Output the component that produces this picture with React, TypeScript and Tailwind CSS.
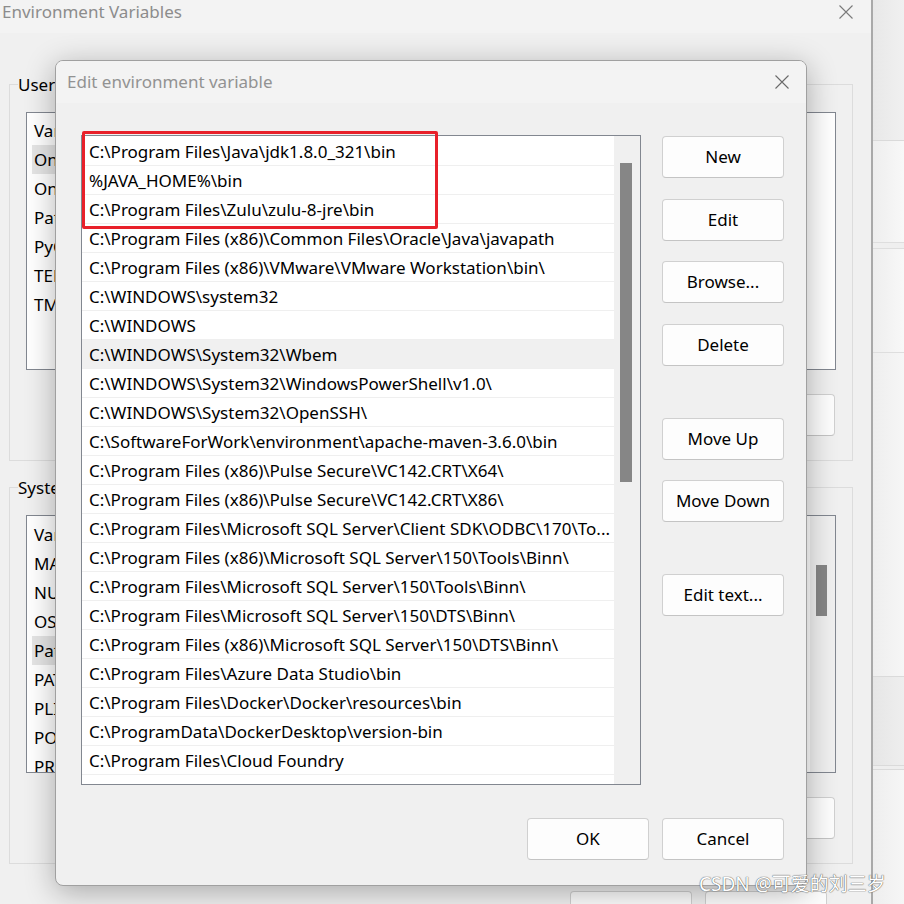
import React from "react";

const paths = [
  "C:\\Program Files\\Java\\jdk1.8.0_321\\bin",
  "%JAVA_HOME%\\bin",
  "C:\\Program Files\\Zulu\\zulu-8-jre\\bin",
  "C:\\Program Files (x86)\\Common Files\\Oracle\\Java\\javapath",
  "C:\\Program Files (x86)\\VMware\\VMware Workstation\\bin\\",
  "C:\\WINDOWS\\system32",
  "C:\\WINDOWS",
  "C:\\WINDOWS\\System32\\Wbem",
  "C:\\WINDOWS\\System32\\WindowsPowerShell\\v1.0\\",
  "C:\\WINDOWS\\System32\\OpenSSH\\",
  "C:\\SoftwareForWork\\environment\\apache-maven-3.6.0\\bin",
  "C:\\Program Files (x86)\\Pulse Secure\\VC142.CRT\\X64\\",
  "C:\\Program Files (x86)\\Pulse Secure\\VC142.CRT\\X86\\",
  "C:\\Program Files\\Microsoft SQL Server\\Client SDK\\ODBC\\170\\To...",
  "C:\\Program Files (x86)\\Microsoft SQL Server\\150\\Tools\\Binn\\",
  "C:\\Program Files\\Microsoft SQL Server\\150\\Tools\\Binn\\",
  "C:\\Program Files\\Microsoft SQL Server\\150\\DTS\\Binn\\",
  "C:\\Program Files (x86)\\Microsoft SQL Server\\150\\DTS\\Binn\\",
  "C:\\Program Files\\Azure Data Studio\\bin",
  "C:\\Program Files\\Docker\\Docker\\resources\\bin",
  "C:\\ProgramData\\DockerDesktop\\version-bin",
  "C:\\Program Files\\Cloud Foundry",
];

const userVars = ["Variable", "OneDrive", "OneDriveConsumer", "Path", "PyCharm", "TEMP", "TMP"];
const sysVars = [
  "Variable",
  "MAVEN_HOME",
  "NUMBER_OF_PROCESSORS",
  "OS",
  "Path",
  "PATHEXT",
  "PLINK_PROTOCOL",
  "POWERSHELL_DISTRIBUTION_CHANNEL",
  "PROCESSOR_ARCHITECTURE",
];

function CloseX({ color = "#5f5f5f" }: { color?: string }) {
  return (
    <svg width="16" height="16" viewBox="0 0 16 16" fill="none">
      <path d="M1.5 1.5 L14.5 14.5 M14.5 1.5 L1.5 14.5" stroke={color} strokeWidth="1.1" />
    </svg>
  );
}

function WinButton({ label, className = "" }: { label: string; className?: string }) {
  return (
    <div
      className={
        "w-[122px] h-[42px] shrink-0 rounded-[4px] border border-[#d0d0d0] border-b-[#c4c4c4] bg-[#fdfdfd] flex items-center justify-center text-[17px] text-black " +
        className
      }
    >
      {label}
    </div>
  );
}

function VarRow({ name, selected }: { name: string; selected: boolean }) {
  return (
    <div
      className={
        selected
          ? "h-[29px] shrink-0 flex items-center ml-[5px] pl-[2px] w-[240px] bg-[#e5e5e5] text-[17px] text-black whitespace-nowrap overflow-hidden"
          : "h-[29px] shrink-0 flex items-center pl-[7px] w-[247px] text-[17px] text-black whitespace-nowrap overflow-hidden"
      }
    >
      {name}
    </div>
  );
}

export default function App() {
  return (
    <div className="relative w-[904px] h-[904px] overflow-hidden bg-[#f0f0f0] font-['Noto_Sans',sans-serif]">
      {/* Window to the right, behind */}
      <div className="absolute left-[873px] top-0 w-[31px] h-[904px] flex flex-col bg-[#f4f4f4]">
        <div className="h-[141px] bg-gradient-to-r from-[#e8e8e8] to-[#f0f0f0] border-b border-[#dadada]" />
        <div className="h-[102px] bg-gradient-to-r from-[#eeeeee] to-[#f8f8f8] border-b border-[#dedede]" />
        <div className="h-[6px] bg-[#efefef] border-b border-[#dedede]" />
        <div className="h-[104px] bg-gradient-to-r from-[#eeeeee] to-[#f8f8f8] border-b border-[#dedede]" />
        <div className="h-[324px] bg-gradient-to-r from-[#eeeeee] to-[#f6f6f6] border-b border-[#dadada]" />
        <div className="h-[89px] bg-gradient-to-r from-[#e6e6e6] to-[#eeeeee] border-b border-[#dadada]" />
        <div className="h-[4px] bg-[#eeeeee] border-b border-[#dadada]" />
        <div className="flex-1 bg-gradient-to-r from-[#eeeeee] to-[#f6f6f6]" />
      </div>

      {/* Environment Variables window (background) */}
      <div className="absolute left-0 top-0 w-[873px] h-[904px] border-r-2 border-[#a9a9a9] flex flex-col bg-[#f0f0f0]">
        <div className="h-[33px] shrink-0 bg-[#f3f3f3] flex items-start justify-between pl-[2px] pr-[17px]">
          <span className="text-[17px] leading-[24px] text-[#8c8c8c]">Environment Variables</span>
          <div className="mt-[4px]">
            <CloseX color="#7a7a7a" />
          </div>
        </div>
        <div className="flex flex-col pl-[9px] pr-[18px]">
          {/* User variables */}
          <div className="relative mt-[51px] h-[377px] border border-[#dcdcdc] px-[16px] pt-[27px] flex flex-col">
            <span className="absolute -top-[12px] left-[8px] bg-[#f0f0f0] text-[17px] leading-[24px] text-black pr-[2px]">
              User variables
            </span>
            <div className="h-[258px] border border-[#828790] bg-white pt-[3px] flex flex-col">
              {userVars.map((v, i) => (
                <VarRow key={v} name={v} selected={i === 1} />
              ))}
            </div>
            <div className="mt-[24px] flex justify-end gap-[12px] pr-[1px]">
              <WinButton label="New..." className="h-[41px]" />
              <WinButton label="Edit..." className="h-[41px]" />
              <WinButton label="Delete" className="h-[41px]" />
            </div>
          </div>

          {/* System variables */}
          <div className="relative mt-[26px] h-[377px] border border-[#dcdcdc] px-[16px] pt-[27px] flex flex-col">
            <span className="absolute -top-[12px] left-[8px] bg-[#f0f0f0] text-[17px] leading-[24px] text-black pr-[2px]">
              System variables
            </span>
            <div className="h-[258px] border border-[#828790] bg-white flex">
              <div className="flex-1 pt-[4px] flex flex-col overflow-hidden">
                {sysVars.map((v, i) => (
                  <VarRow key={v} name={v} selected={i === 4} />
                ))}
              </div>
              <div className="w-[25px] bg-[#f0f0f0] pt-[49px] pl-[6px]">
                <div className="w-[11px] h-[51px] bg-[#868686]" />
              </div>
            </div>
            <div className="mt-[24px] flex justify-end gap-[12px] pr-[1px]">
              <WinButton label="New..." className="h-[41px]" />
              <WinButton label="Edit..." className="h-[41px]" />
              <WinButton label="Delete" className="h-[41px]" />
            </div>
          </div>

          <div className="mt-[27px] flex justify-end gap-[13px] pr-[26px]">
            <WinButton label="OK" className="items-start pt-[12px]" />
            <WinButton label="Cancel" className="items-start pt-[12px]" />
          </div>
        </div>
      </div>

      {/* Edit environment variable dialog */}
      <div className="absolute left-[55px] top-[60px] w-[752px] h-[826px] rounded-[8px] border border-[#a0a0a0] bg-[#f0f0f0] shadow-[0_6px_30px_rgba(0,0,0,0.30)] overflow-hidden flex flex-col">
        <div className="h-[42px] shrink-0 bg-[#f3f3f3] flex items-center justify-between pl-[11px] pr-[16px]">
          <span className="text-[17px] text-[#929292]">Edit environment variable</span>
          <CloseX color="#6a6a6a" />
        </div>

        <div className="flex pl-[25px] pt-[32px]">
          <div className="relative w-[560px] h-[650px] shrink-0 border border-[#828790] bg-white flex">
            <div className="w-[532px] pt-[1px] flex flex-col">
              {paths.map((p, i) => (
                <div
                  key={p}
                  className={
                    "h-[29px] shrink-0 border-b border-[#efefef] pl-[7px] pt-[2px] flex items-center text-[17px] text-black whitespace-nowrap overflow-hidden " +
                    (i === 7 ? "bg-[#f0f0f0]" : "")
                  }
                >
                  {p}
                </div>
              ))}
            </div>
            <div className="flex-1 bg-[#f0f0f0] pt-[27px] pl-[6px]">
              <div className="w-[12px] h-[319px] bg-[#868686]" />
            </div>
            {/* red annotation box */}
            <div className="absolute left-0 -top-[5px] w-[356px] h-[98px] border-[3.5px] border-[#e8202a] rounded-[2px]" />
          </div>

          <div className="ml-[21px] flex flex-col">
            <WinButton label="New" className="mt-[1px]" />
            <WinButton label="Edit" className="mt-[21px]" />
            <WinButton label="Browse..." className="mt-[20px]" />
            <WinButton label="Delete" className="mt-[21px]" />
            <WinButton label="Move Up" className="mt-[52px]" />
            <WinButton label="Move Down" className="mt-[20px]" />
            <WinButton label="Edit text..." className="mt-[52px]" />
          </div>
        </div>

        <div className="mt-[33px] flex justify-end gap-[13px] pr-[22px]">
          <WinButton label="OK" className="h-[41px]" />
          <WinButton label="Cancel" className="h-[41px]" />
        </div>
      </div>

      {/* watermark */}
      <div className="absolute left-[699px] top-[872px] text-[19px] leading-[24px] text-white font-['Noto_Sans','Noto_Sans_CJK_SC',sans-serif] [text-shadow:0_0_1px_#555,0_0_1px_#555]">
        CSDN @可爱的刘三岁
      </div>
    </div>
  );
}
